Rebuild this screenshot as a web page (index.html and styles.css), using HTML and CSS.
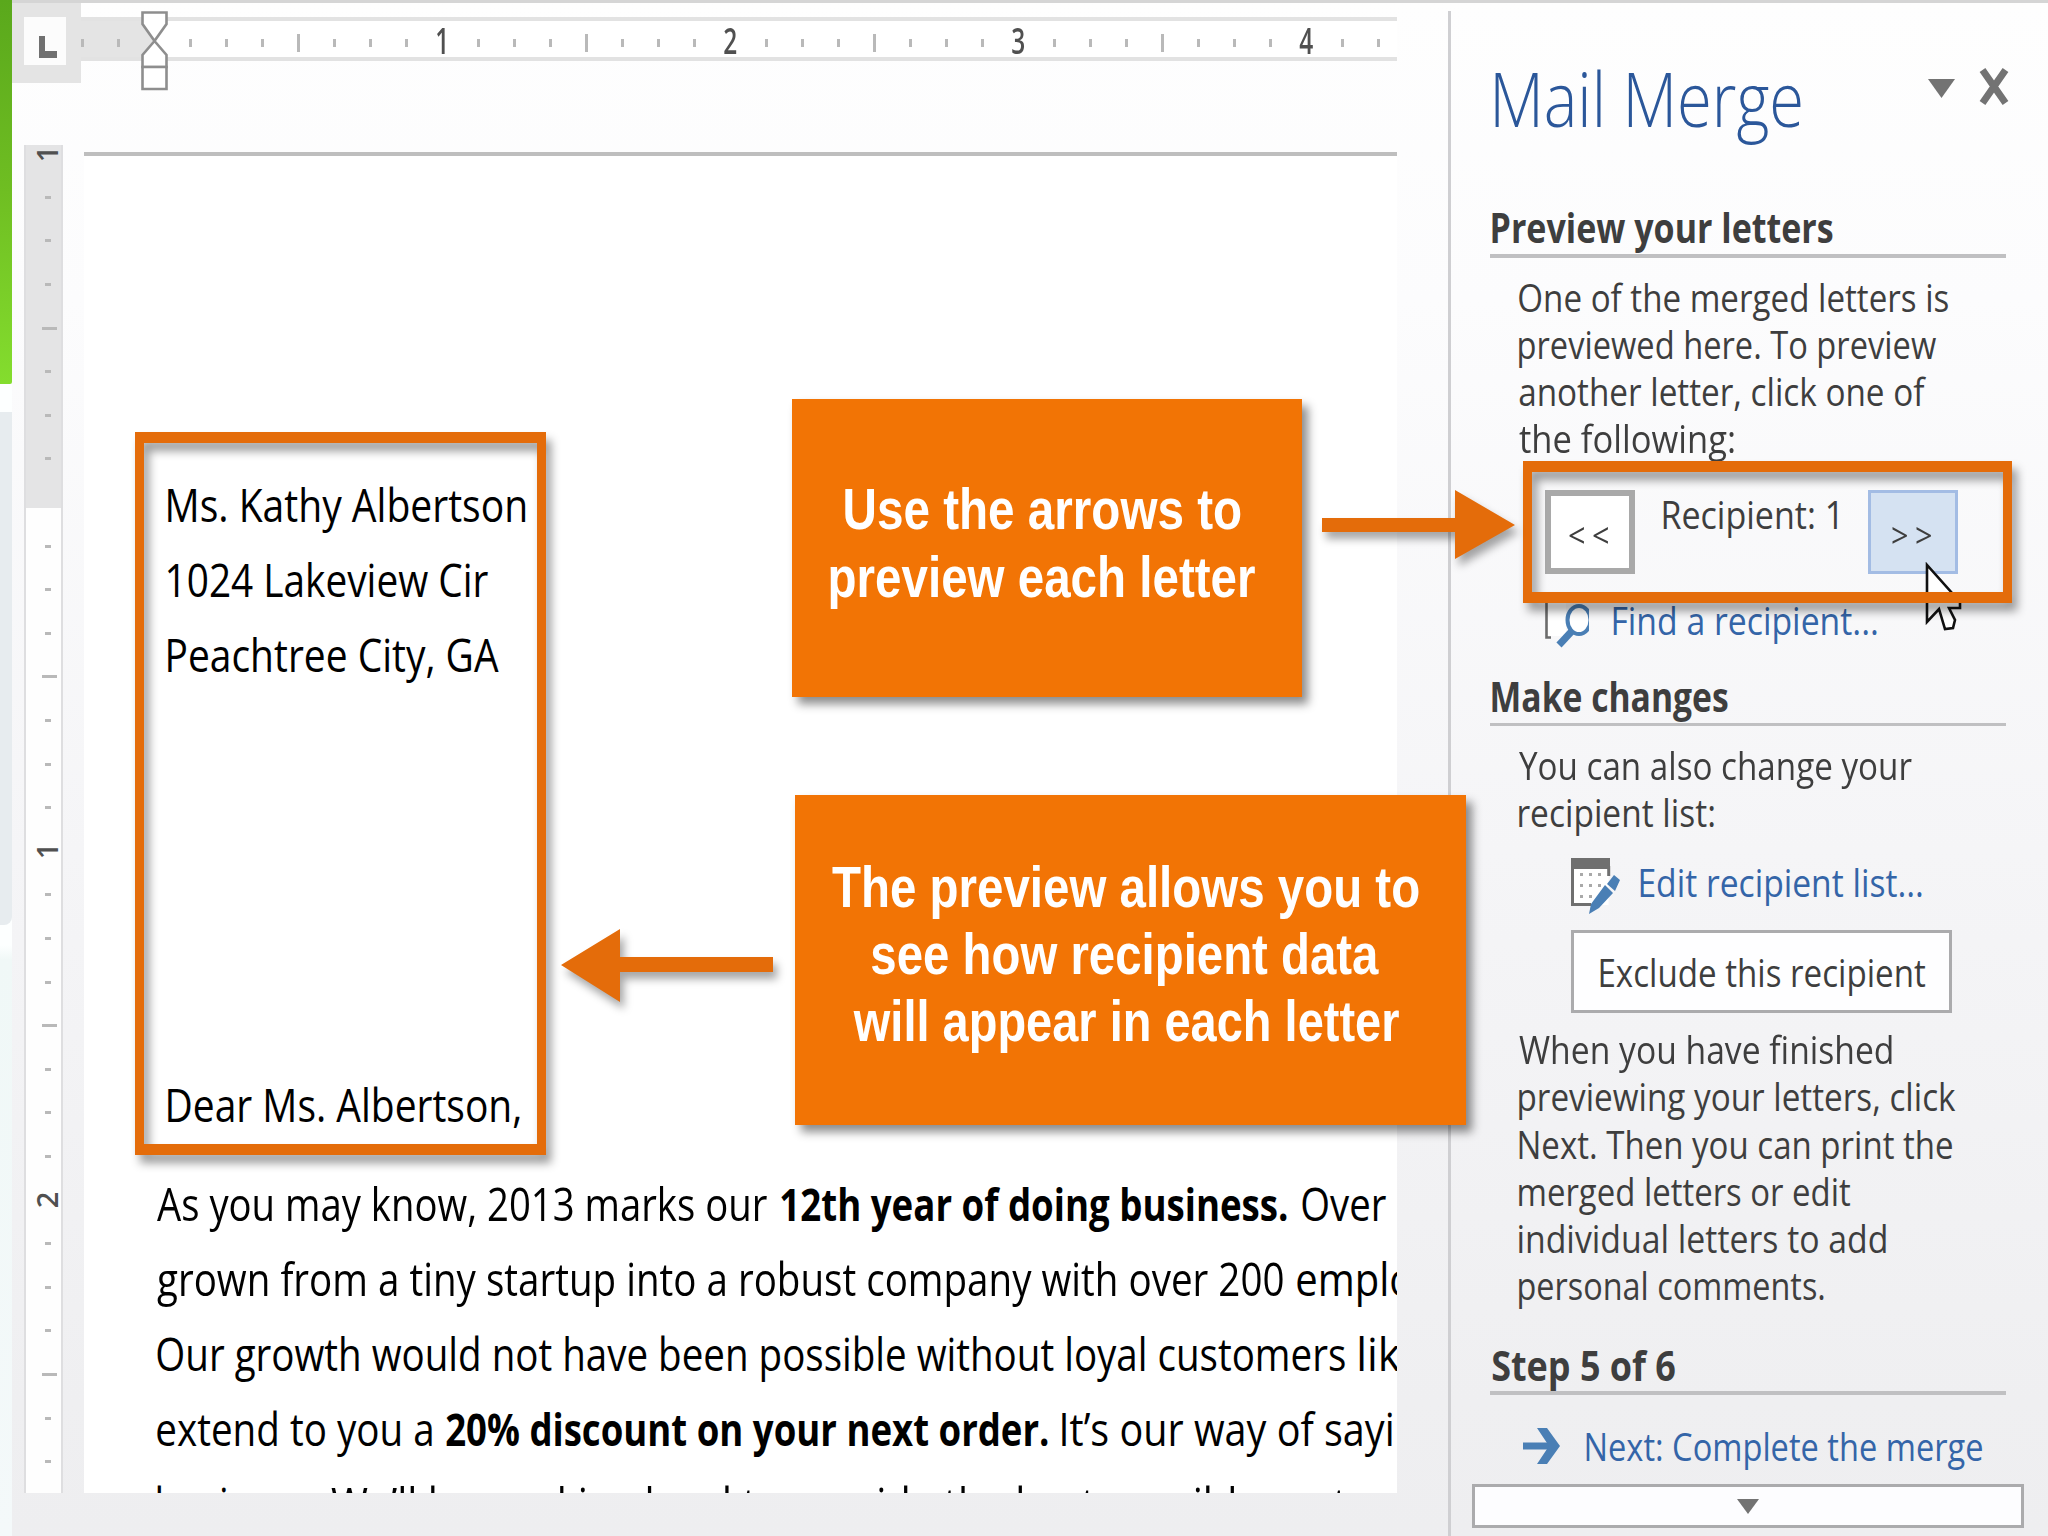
FILE: index.html
```html
<!DOCTYPE html>
<html lang="en">
<head>
  <meta charset="UTF-8" />
  <meta name="viewport" content="width=device-width, initial-scale=1.0"/>
  <title>Mail Merge</title>
  <link rel="stylesheet" href="styles.css">
</head>
<body>
  <div class="slide-edge">
    <div class="edge-green"></div>
    <div class="edge-grey"></div>
  </div>

  <main class="editor">
    <div class="ruler-row">
      <div class="corner">
        <div class="tab-stop">
          <svg width="18" height="22" viewBox="0 0 18 22"><path d="M0 0H6V15H18V22H0Z" fill="#707070"/></svg>
        </div>
      </div>
      <div class="h-ruler"><div class="h-track" id="hTrack"></div></div>
      <svg class="indent" width="27" height="80" viewBox="0 0 27 80">
        <path d="M1.5 1.5H25.5V13L13.5 30L25.5 44V56H1.5V44L13.5 30L1.5 13Z" fill="#fff" stroke="#8e8e8e" stroke-width="2.6"/>
        <path d="M1.5 56H25.5V78H1.5Z" fill="#fff" stroke="#8e8e8e" stroke-width="2.6"/>
      </svg>
    </div>

    <div class="doc-row">
      <div class="v-ruler"><div id="vTrack"></div></div>
      <div class="page">
        <div class="address">
          <p><span class="fit" data-w="357">Ms. Kathy Albertson</span></p>
          <p><span class="fit" data-w="320">1024 Lakeview Cir</span></p>
          <p><span class="fit" data-w="331">Peachtree City, GA</span></p>
          <p class="greeting"><span class="fit" data-w="352">Dear Ms. Albertson,</span></p>
        </div>
        <div class="letter">
          <p><span class="fit" data-w="610">As you may know, 2013 marks our</span><b class="fit" data-w="506">12th year of doing business.</b><span class="fit" data-w="84">Over</span><span class="fit" data-w="50">the</span></p>
          <p><span class="fit" data-w="1126">grown from a tiny startup into a robust company with over 200</span><span class="fit" data-w="199">employees</span></p>
          <p><span class="fit" data-w="1188">Our growth would not have been possible without loyal customers</span><span class="fit" data-w="63">like</span></p>
          <p><span class="fit" data-w="275">extend to you a</span><b class="fit" data-w="602">20% discount on your next order.</b><span class="fit" data-w="378">It’s our way of saying</span></p>
          <p><span class="fit" data-w="160">business.</span><span class="fit" data-w="1116">We’ll be working hard to provide the best possible customer</span></p>
        </div>
      </div>
    </div>
  </main>

  <aside class="pane">
    <div class="pane-head">
      <h1><span class="fit" data-w="306">Mail Merge</span></h1>
      <svg class="menu-arrow" width="27" height="19" viewBox="0 0 27 19"><path d="M0 0H27L13.5 19Z" fill="#737373"/></svg>
      <svg class="close" width="30" height="37" viewBox="0 0 30 37"><path d="M3.5 2L26.5 35M26.5 2L3.5 35" stroke="#737373" stroke-width="7"/></svg>
    </div>

    <h2><span class="fit" data-w="341">Preview your letters</span></h2>
    <div class="copy">
      <p><span class="fit" data-w="429">One of the merged letters is</span></p>
      <p><span class="fit" data-w="417">previewed here. To preview</span></p>
      <p><span class="fit" data-w="407">another letter, click one of</span></p>
      <p><span class="fit" data-w="215">the following:</span></p>
    </div>
    <div class="nav">
      <button class="prev"><span>&lt;</span><span>&lt;</span></button>
      <div class="recipient"><span class="fit" data-w="174">Recipient: 1</span></div>
      <button class="next"><span>&gt;</span><span>&gt;</span></button>
    </div>
    <a class="find">
      <svg width="45" height="52" viewBox="0 0 45 52">
        <path d="M3 0H22V40H3Z" fill="#fff"/>
        <path d="M2.5 0V41.5H7" fill="none" stroke="#6c6c6c" stroke-width="2.6"/>
        <path d="M28 35L15 49" stroke="#4a7fb5" stroke-width="7"/>
        <ellipse cx="35" cy="24" rx="11.5" ry="14" fill="#fff" stroke="#4a7fb5" stroke-width="4"/>
      </svg>
      <span class="fit" data-w="264">Find a recipient...</span>
    </a>

    <h2 class="make"><span class="fit" data-w="236">Make changes</span></h2>
    <div class="copy">
      <p><span class="fit" data-w="393">You can also change your</span></p>
      <p><span class="fit" data-w="195">recipient list:</span></p>
    </div>
    <a class="edit">
      <svg width="50" height="56" viewBox="0 0 50 56">
        <path d="M1.5 1H37.5V47H1.5Z" fill="#fff"/>
        <path d="M0 0H39V11H0Z" fill="#6f6f6f"/>
        <path d="M1.5 8V46.5H20M37.7 8V18" fill="none" stroke="#6f6f6f" stroke-width="3"/>
        <path d="M9 16.5H34M9 27.5H34M9 38.5H26" stroke="#a9a9a9" stroke-width="3" stroke-dasharray="3 6"/>
        <path d="M43 17L49 22L44 33L36 26ZM34 27L42 35L28 50L18 56L20 46Z" fill="#4a7fb5"/>
      </svg>
      <span class="fit" data-w="282">Edit recipient list...</span>
    </a>
    <button class="exclude"><span class="fit" data-w="325">Exclude this recipient</span></button>
    <div class="copy finish">
      <p><span class="fit" data-w="373">When you have finished</span></p>
      <p><span class="fit" data-w="437">previewing your letters, click</span></p>
      <p><span class="fit" data-w="433">Next. Then you can print the</span></p>
      <p><span class="fit" data-w="331">merged letters or edit</span></p>
      <p><span class="fit" data-w="367">individual letters to add</span></p>
      <p><span class="fit" data-w="305">personal comments.</span></p>
    </div>

    <h2 class="step"><span class="fit" data-w="183">Step 5 of 6</span></h2>
    <a class="go">
      <svg width="37" height="38" viewBox="0 0 37 38"><path d="M0 19H30" stroke="#4a7fb5" stroke-width="7"/><path d="M14 1H24L37 19L24 37H14L26 19Z" fill="#4a7fb5"/></svg>
      <span class="fit" data-w="396">Next: Complete the merge</span>
    </a>
    <div class="scroll-down">
      <svg width="22" height="15" viewBox="0 0 22 15"><path d="M0 0H22L11 15Z" fill="#737373"/></svg>
    </div>
  </aside>

  <!-- annotations drawn over the window -->
  <svg class="cursor" width="40" height="72" viewBox="0 0 40 72">
    <path d="M2 3V60L14 47L20 67L28 66L30 58L24 46H35V40Z" fill="#fff" stroke="#111" stroke-width="2.6"/>
  </svg>
  <div class="frame frame-address"></div>
  <div class="frame frame-nav"></div>
  <div class="callout callout-arrows">
    <p><span class="fit" data-w="396">Use the arrows to</span></p>
    <p><span class="fit" data-w="425">preview each letter</span></p>
  </div>
  <div class="callout callout-preview">
    <p><span class="fit" data-w="587">The preview allows you to</span></p>
    <p><span class="fit" data-w="507">see how recipient data</span></p>
    <p><span class="fit" data-w="546">will appear in each letter</span></p>
  </div>
  <svg class="arrow arrow-right" width="195" height="70" viewBox="0 0 195 70"><path d="M2 28H135V0L195 35L135 69V42H2Z" fill="#e46c0a"/></svg>
  <svg class="arrow arrow-left" width="212" height="74" viewBox="0 0 212 74"><path d="M212 28H59V0L0 36L59 73V43H212Z" fill="#e46c0a"/></svg>

  <script>
    function buildRuler(id, count, zero) {
      const track = document.getElementById(id);
      for (let i = 0; i < count; i++) {
        const cell = document.createElement('div');
        const n = Math.abs(i - zero);
        cell.className = 'cell';
        if (n % 8 === 0) {
          cell.innerHTML = n === 0 ? '' : `<span class="num">${n / 8}</span>`;
        } else {
          cell.innerHTML = `<i class="${n % 8 === 4 ? 'tick half' : 'tick'}"></i>`;
        }
        track.appendChild(cell);
      }
    }

    // squeeze each text run to its width
    function fitText() {
      const ctx = document.createElement('canvas').getContext('2d');
      document.querySelectorAll('.fit').forEach(el => {
        const cs = getComputedStyle(el);
        ctx.font = `${cs.fontWeight} ${cs.fontSize} ${cs.fontFamily}`;
        const m = ctx.measureText(el.textContent);
        const w = Number(el.dataset.w);
        const scale = w / (m.actualBoundingBoxLeft + m.actualBoundingBoxRight);
        el.style.transform = `translateX(${m.actualBoundingBoxLeft * scale}px) scaleX(${scale})`;
        el.style.marginRight = `${w - el.offsetWidth}px`;
      });
    }

    buildRuler('hTrack', 37, 2);
    buildRuler('vTrack', 31, 8);
    fitText();
  </script>
</body>
</html>
```
FILE: styles.css
```css
* {
  box-sizing: border-box;
}

body {
  position: relative;
  display: flex;
  width: 2048px;
  height: 1536px;
  margin: 0;
  overflow: hidden;
  font-family: "Open Sans", "Noto Sans", sans-serif;
  color: #3e3e3e;
  background: linear-gradient(#fefefe 0, #fcfcfd 300px, #f5f5f7 850px, #efeff1 1400px, #eeeef0 100%);
}

h1, h2, p {
  margin: 0;
}

svg {
  display: block;
  flex: none;
}

button {
  padding: 0;
  font: inherit;
  color: inherit;
}

.fit {
  display: inline-block;
  flex: none;
  white-space: nowrap;
  transform-origin: 0 50%;
}

/* Slide background at the left */
.slide-edge {
  width: 12px;
  flex: none;
  background: linear-gradient(#fdffff 920px, #fdffff 945px, #f0f8f7 960px, #f4f9fa);
}

.edge-green {
  height: 384px;
  background: linear-gradient(#5aa81c, #6fbe22 50%, #84dd2e);
  border-radius: 0 0 2px 0;
}

.edge-grey {
  height: 513px;
  margin-top: 28px;
  background: #e7ecef;
  border-radius: 0 0 8px 0;
}

/* Document side */
.editor {
  display: flex;
  flex-direction: column;
  width: 1436px;
  flex: none;
  border-top: 3px solid #d5d5d5;
}

.ruler-row {
  position: relative;
  display: flex;
  height: 142px;
  flex: none;
}

.corner {
  display: flex;
  width: 69px;
  height: 80px;
  padding: 14px 0 0 12px;
  background: #e4e4e4;
}

.tab-stop {
  width: 42px;
  height: 48px;
  padding: 19px 0 0 15px;
  background: #fcfcfc;
}

.h-ruler {
  width: 1316px;
  height: 44px;
  margin-top: 14px;
  border-top: 4px solid #e2e2e2;
  border-bottom: 4px solid #e2e2e2;
  background: linear-gradient(90deg, #e4e4e4 73px, #fff 73px);
}

.h-track {
  display: flex;
  height: 36px;
  margin-left: -17px;
}

.cell {
  display: flex;
  align-items: center;
  justify-content: center;
  flex: none;
}

.h-track .cell {
  width: 36px;
  height: 44px;
}

.tick {
  width: 3px;
  height: 8px;
  background: #b9b9b9;
}

.half {
  height: 18px;
}

.num {
  font-size: 36px;
  font-weight: 600;
  line-height: 36px;
  color: #505050;
  transform: scaleX(0.68);
}

.h-track .num {
  margin-top: -4px;
}

.indent {
  position: absolute;
  left: 129px;
  top: 8px;
}

.doc-row {
  display: flex;
  height: 1348px;
}

.v-ruler {
  width: 39px;
  margin-left: 12px;
  border: 2px solid #dedee0;
  border-width: 0 2px;
  background: linear-gradient(#e4e4e5 363px, #fefefe 363px);
}

#vTrack {
  margin: -13px 0 0 0;
}

.v-ruler .cell {
  height: 43.6px;
  padding-left: 8px;
}

.v-ruler .tick {
  width: 6px;
  height: 3px;
}

.v-ruler .half {
  width: 15px;
  margin-left: 3px;
}

.v-ruler .num {
  font-size: 29px;
  transform: rotate(-90deg);
}

.page {
  width: 1313px;
  margin: 7px 0 0 21px;
  padding-top: 311px;
  border-top: 4px solid #bebebe;
  background: #fff;
  color: #000;
  font-size: 45px;
  line-height: 75px;
  overflow: hidden;
}

.address {
  padding-left: 84px;
}

.address p,
.letter p {
  display: flex;
  gap: 14px;
  height: 75px;
}

.address .greeting {
  margin-top: 375px;
}

.letter {
  margin-top: 24px;
  padding-left: 73px;
}

/* Mail Merge pane */
.pane {
  display: flex;
  flex-direction: column;
  width: 600px;
  padding: 45px 0 0 39px;
  border-top: 3px solid #d5d5d5;
  background: linear-gradient(#cfcfd2, #cfcfd2) 0 8px / 3px 100% no-repeat;
  font-size: 39px;
  line-height: 47px;
}

.pane-head {
  display: flex;
  height: 100px;
  padding-left: 8px;
}

h1 {
  width: 433px;
  font-size: 76px;
  font-weight: 300;
  line-height: 100px;
  color: #2b579a;
}

.menu-arrow {
  margin-top: 31px;
}

.close {
  margin: 20px 0 0 24px;
}

h2 {
  width: 516px;
  height: 56px;
  margin: 54px 0 0 3px;
  padding-left: 2px;
  font-size: 42px;
  line-height: 49px;
  border-bottom: 4px solid #c0c0c2;
}

.copy {
  margin: 15px 0 0 32px;
}

.copy p {
  height: 47px;
}

.nav {
  display: flex;
  height: 135px;
  padding: 29px 0 0 58px;
}

.nav button {
  display: flex;
  align-items: center;
  justify-content: center;
  gap: 7px;
  width: 90px;
  height: 84px;
  padding: 6px 5px 0 0;
  font-size: 34px;
}

.nav button span {
  width: 18px;
  margin-right: -1px;
  transform: scaleX(0.9);
}

.prev {
  border: 6px solid #a9a9a9;
  background: #fff;
}

.next {
  border: 3px solid #a3bce4;
  background: #d5e2f2;
}

.recipient {
  width: 205px;
  margin: 0 0 0 28px;
}

.find,
.edit,
.go {
  display: flex;
  height: 47px;
  color: #3465a8;
}

.find {
  gap: 24px;
  padding-left: 57px;
}

h2.make {
  height: 55px;
  margin-top: 28px;
  border-bottom-width: 3px;
}

.edit {
  gap: 19px;
  margin-top: 23px;
  padding-left: 84px;
}

.exclude {
  width: 381px;
  height: 83px;
  margin: 25px 0 0 84px;
  padding-left: 2px;
  border: 3px solid #ababad;
  background: #fefeff;
}

.finish {
  margin-top: 12px;
}

.finish p {
  height: 47.3px;
}

h2.step {
  height: 55px;
  margin-top: 31px;
}

.go {
  gap: 26px;
  margin-top: 27px;
  padding-left: 36px;
}

.go svg {
  margin-top: 5px;
}

.scroll-down {
  display: flex;
  justify-content: center;
  width: 552px;
  height: 44px;
  margin: 15px 0 0 -15px;
  padding-top: 12px;
  border: 3px solid #ababad;
  background: #fdfdff;
}

/* Annotations */
.cursor {
  position: absolute;
  left: 1925px;
  top: 562px;
}

.frame {
  position: absolute;
  border: 11px solid #e46c0a;
  border-width: 11px 9px;
  filter: drop-shadow(5px 8px 5px rgba(0, 0, 0, 0.4));
}

.frame-address {
  left: 135px;
  top: 432px;
  width: 411px;
  height: 723px;
}

.frame-nav {
  left: 1523px;
  top: 461px;
  width: 489px;
  height: 142px;
}

.callout {
  position: absolute;
  background: #f27405;
  color: #fff;
  font-family: "Liberation Sans", Arial, sans-serif;
  font-size: 58px;
  font-weight: bold;
  line-height: 68px;
  text-align: center;
  box-shadow: 6px 7px 9px rgba(0, 0, 0, 0.45);
}

.callout p {
  height: 68px;
}

.callout-arrows {
  left: 792px;
  top: 399px;
  width: 510px;
  height: 298px;
  padding: 76px 9px 0 0;
}

.callout-preview {
  left: 795px;
  top: 795px;
  width: 671px;
  height: 330px;
  padding: 58px 10px 0 0;
}

.callout-preview p {
  height: 67px;
}

.arrow {
  position: absolute;
  filter: drop-shadow(4px 7px 4px rgba(0, 0, 0, 0.35));
}

.arrow-right {
  left: 1320px;
  top: 490px;
}

.arrow-left {
  left: 561px;
  top: 929px;
}
```
